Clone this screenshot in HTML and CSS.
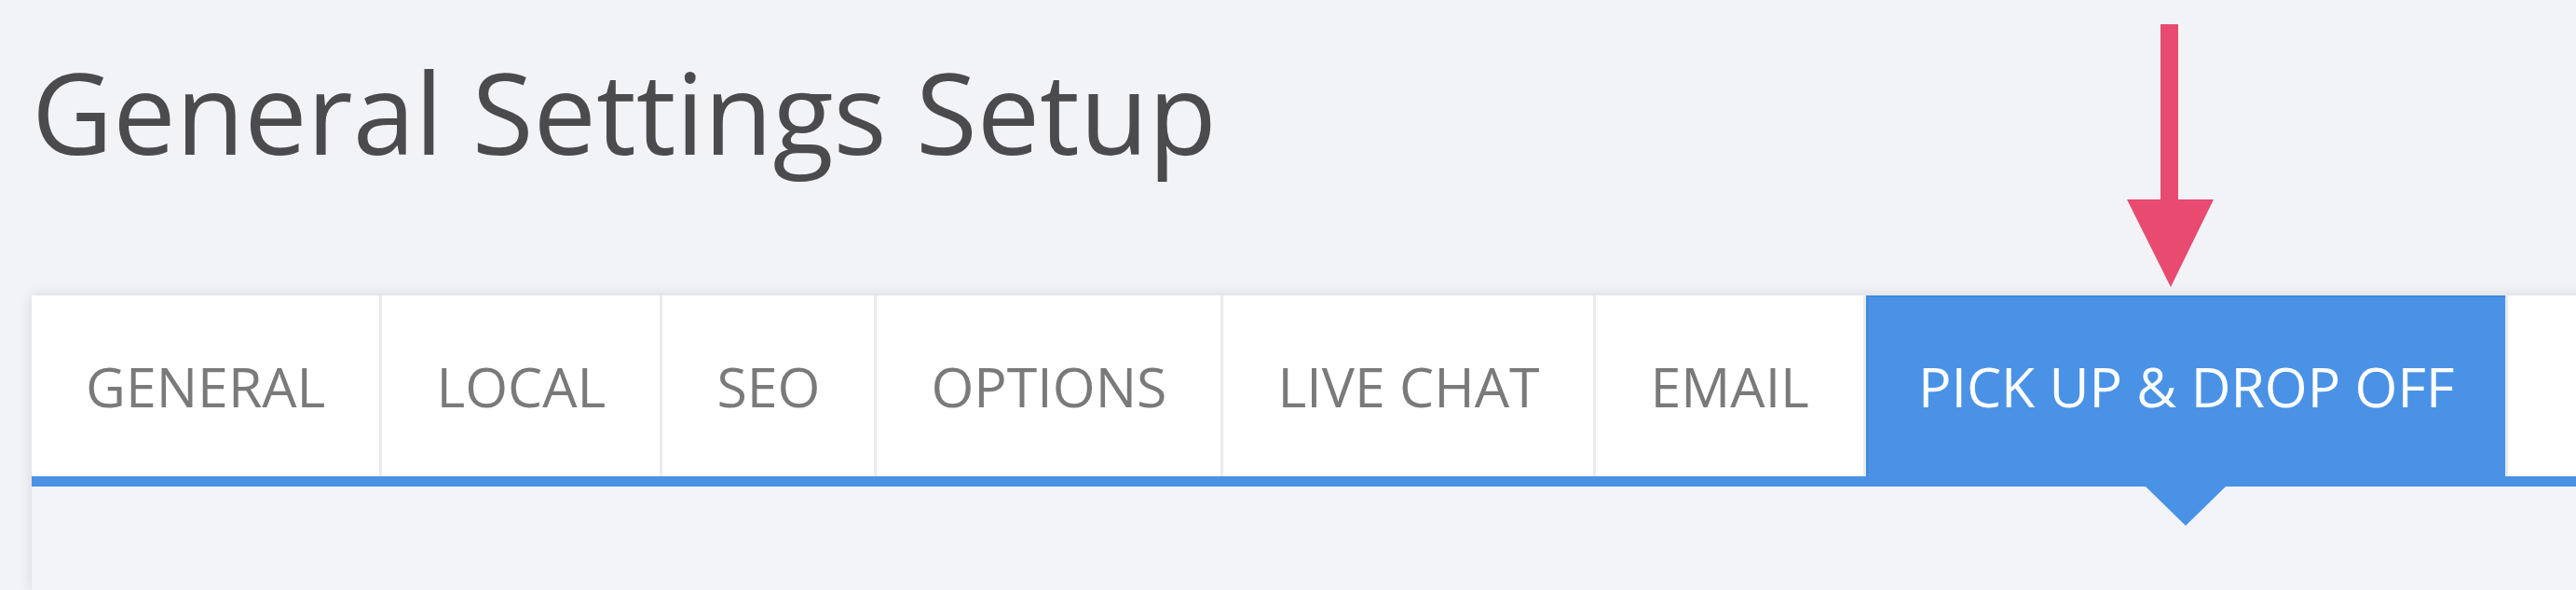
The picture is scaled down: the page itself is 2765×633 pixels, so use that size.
FILE: index.html
```html
<!DOCTYPE html>
<html lang="en">
<head>
    <meta charset="UTF-8">
    <meta name="viewport" content="width=device-width, initial-scale=1.0">
    <title>General Settings Setup</title>
    <link rel="stylesheet" href="styles.css">
</head>
<body>
    <div class="page">
        <h1 class="page-title">General Settings Setup</h1>

        <div class="settings-card">
            <ul class="tabs">
                <li class="tab">General</li>
                <li class="tab">Local</li>
                <li class="tab">SEO</li>
                <li class="tab">Options</li>
                <li class="tab">Live Chat</li>
                <li class="tab">Email</li>
                <li class="tab active">
                    Pick Up &amp; Drop Off
                    <svg class="pointer-arrow" width="93" height="282" viewBox="0 0 93 282">
                        <rect x="36" y="0" width="19" height="190" fill="#e84a70"/>
                        <polygon points="0,188 93,188 47,282" fill="#e84a70"/>
                    </svg>
                </li>
                <li class="tab tab-rest"></li>
            </ul>
            <div class="tab-body"></div>
        </div>
    </div>
</body>
</html>
```

FILE: styles.css
```css
body {
    margin: 0;
    background-color: #f2f3f7;
    font-family: "Open Sans", Arial, sans-serif;
    overflow: hidden;
}

.page {
    padding: 60px 0 0 34px;
}

.page-title {
    margin: 0 0 137px 0;
    font-size: 120px;
    font-weight: 400;
    line-height: 1;
    color: #4b4b4d;
}

.settings-card {
    width: 2800px;
    background-color: #f3f4f8;
    box-shadow: 0 0 14px rgba(0, 0, 0, 0.12);
}

.tabs {
    display: flex;
    margin: 0;
    padding: 0;
    list-style: none;
    background-color: white;
    border-bottom: 11px solid #4a92e6;
}

.tab {
    position: relative;
    display: flex;
    align-items: center;
    height: 194px;
    padding: 0 58px;
    border-right: 3px solid #ebebee;
    font-size: 59px;
    color: #7a7a7a;
    text-transform: uppercase;
    white-space: nowrap;
}

.tab.active {
    background-color: #4a92e6;
    border-right: 3px solid #e6e8ee;
    box-shadow: inset 2px 2px 0 #3d87df;
    color: white;
    padding: 0 55px 0 56px;
}

.tab.active::after {
    content: "";
    position: absolute;
    top: calc(100% + 11px);
    left: 50%;
    margin-left: -43px;
    border-left: 43px solid transparent;
    border-right: 43px solid transparent;
    border-top: 42px solid #4a92e6;
}

.pointer-arrow {
    position: absolute;
    left: 50%;
    bottom: calc(100% + 9px);
    margin-left: -63px;
}

.tab-rest {
    flex: 1;
    border-right: none;
}

.tab-body {
    min-height: 111px;
}
```
